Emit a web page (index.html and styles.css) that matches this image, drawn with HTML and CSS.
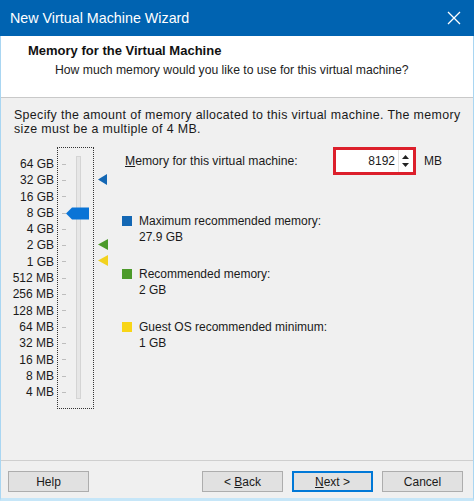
FILE: index.html
```html
<!DOCTYPE html>
<html>
<head>
<meta charset="utf-8">
<link rel="stylesheet" href="styles.css">
</head>
<body>
<div class="window">
  <div class="titlebar">
    <span class="title">New Virtual Machine Wizard</span>
    <svg class="close" width="14" height="14" viewBox="0 0 14 14"><path d="M1 1 L13 13 M13 1 L1 13" stroke="#fff" stroke-width="1.3" fill="none"/></svg>
  </div>
  <div class="header">
    <div class="h-title">Memory for the Virtual Machine</div>
    <div class="h-sub">How much memory would you like to use for this virtual machine?</div>
  </div>
  <div class="content">
    <p class="intro">Specify the amount of memory allocated to this virtual machine. The memory size must be a multiple of 4 MB.</p>
    <div class="main">
      <div class="slider">
        <div class="labels">
          <span>64 GB</span><span>32 GB</span><span>16 GB</span><span>8 GB</span><span>4 GB</span><span>2 GB</span><span>1 GB</span><span>512 MB</span><span>256 MB</span><span>128 MB</span><span>64 MB</span><span>32 MB</span><span>16 MB</span><span>8 MB</span><span>4 MB</span>
        </div>
        <div class="focus">
          <div class="ticks">
            <i></i><i></i><i></i><i></i><i></i><i></i><i></i><i></i><i></i><i></i><i></i><i></i><i></i><i></i><i></i>
          </div>
          <div class="track"></div>
          <svg class="thumb" width="24" height="13" viewBox="0 0 24 13"><path d="M0 6.5 L6 0.5 H23 V12.5 H6 Z" fill="#0a74d6"/></svg>
        </div>
        <div class="markers">
          <svg class="mk mk-blue" width="9" height="11" viewBox="0 0 9 11"><path d="M0 5.5 L9 0 V11 Z" fill="#1367b4"/></svg>
          <svg class="mk mk-green" width="10" height="11" viewBox="0 0 10 11"><path d="M0 5.5 L10 0 V11 Z" fill="#4c9a2a"/></svg>
          <svg class="mk mk-yellow" width="10" height="11" viewBox="0 0 10 11"><path d="M0 5.5 L10 0 V11 Z" fill="#f2d21e"/></svg>
        </div>
      </div>
      <div class="right">
        <div class="memrow">
          <span class="memlabel"><u>M</u>emory for this virtual machine:</span>
          <div class="spinwrap">
            <div class="spin">
              <span class="val">8192</span>
              <div class="arrows">
                <svg width="9" height="8" viewBox="0 0 9 8"><path d="M1 6 L4.5 2 L8 6 Z" fill="#222"/></svg>
                <svg width="9" height="8" viewBox="0 0 9 8"><path d="M1 2 L4.5 6 L8 2 Z" fill="#222"/></svg>
              </div>
            </div>
          </div>
          <span class="unit">MB</span>
        </div>
        <div class="legend">
          <div class="item">
            <div class="line"><span class="sq sq-blue"></span>Maximum recommended memory:</div>
            <div class="value">27.9 GB</div>
          </div>
          <div class="item">
            <div class="line"><span class="sq sq-green"></span>Recommended memory:</div>
            <div class="value">2 GB</div>
          </div>
          <div class="item">
            <div class="line"><span class="sq sq-yellow"></span>Guest OS recommended minimum:</div>
            <div class="value">1 GB</div>
          </div>
        </div>
      </div>
    </div>
  </div>
  <div class="footer">
    <button class="btn">Help</button>
    <div class="spacer"></div>
    <button class="btn">&lt; <u>B</u>ack</button>
    <button class="btn btn-default"><u>N</u>ext &gt;</button>
    <button class="btn">Cancel</button>
  </div>
</div>
</body>
</html>
```

FILE: styles.css
```css
* { box-sizing: border-box; }
html, body { margin: 0; padding: 0; }
body {
  width: 474px;
  height: 501px;
  overflow: hidden;
  font-family: "Liberation Sans", Arial, sans-serif;
  font-size: 12px;
  color: #1a1a1a;
  background: #f0f0f0;
}
.window {
  width: 474px;
  height: 501px;
  display: flex;
  flex-direction: column;
  background: #f0f0f0;
  border-left: 1px solid #a9d6f2;
  border-right: 1px solid #a9d6f2;
  border-bottom: 3px solid #c6e6f8;
}
.titlebar {
  height: 36px;
  margin: 0 -1px;
  background: #0063b1;
  display: flex;
  align-items: center;
  justify-content: space-between;
  padding: 0 13px 0 10px;
  flex: none;
}
.title {
  color: #fff;
  font-size: 14.3px;
}
.close { display: block; }
.header {
  height: 62px;
  background: #fff;
  border-bottom: 1px solid #c9c9c9;
  padding: 7px 0 0 27px;
  flex: none;
}
.h-title {
  font-weight: bold;
  font-size: 13px;
  line-height: 16px;
  color: #111;
}
.h-sub {
  margin-top: 3px;
  padding-left: 27px;
  font-size: 12.2px;
  line-height: 16px;
  color: #222;
}
.content {
  flex: 1;
  padding: 10px 0 0 13px;
}
.intro {
  margin: 0;
  line-height: 14px;
  width: 456px;
  font-size: 12.4px;
  letter-spacing: 0.35px;
}
.main {
  display: flex;
  margin-top: 11px;
}
.slider {
  display: flex;
  width: 108px;
  flex: none;
}
.labels {
  width: 40px;
  display: flex;
  flex-direction: column;
  align-items: flex-end;
  padding-top: 9px;
}
.labels span {
  height: 16.3px;
  line-height: 16.3px;
  white-space: nowrap;
}
.focus {
  position: relative;
  margin-left: 3px;
  width: 37px;
  height: 262px;
  border: 1px dotted #333;
}
.ticks {
  display: flex;
  flex-direction: column;
  padding-top: 8px;
  padding-left: 4px;
}
.ticks i {
  display: flex;
  align-items: center;
  height: 16.3px;
}
.ticks i::before {
  content: "";
  width: 4px;
  height: 1px;
  background: #bdbdbd;
}
.track {
  position: absolute;
  left: 18px;
  top: 8px;
  width: 5px;
  height: 243px;
  background: #e6e6e6;
  border: 1px solid #d4d4d4;
}
.thumb {
  position: absolute;
  left: 8px;
  top: 59px;
}
.markers {
  position: relative;
  flex: 1;
}
.mk { position: absolute; left: 4px; }
.mk-blue { top: 27px; }
.mk-green { top: 92px; }
.mk-yellow { top: 108px; }
.right {
  flex: 1;
}
.memrow {
  display: flex;
  align-items: center;
  height: 28px;
}
.memlabel {
  width: 211px;
  padding-left: 3px;
  font-size: 12.2px;
}
.spinwrap {
  width: 83px;
  height: 28px;
  border: 3px solid #dc1f2b;
}
.spin {
  display: flex;
  height: 22px;
  background: #fff;
  align-items: center;
}
.val {
  flex: 1;
  text-align: right;
  padding-right: 3px;
}
.arrows {
  width: 14px;
  height: 22px;
  display: flex;
  flex-direction: column;
  justify-content: center;
  align-items: center;
  border-left: 1px solid #e3e3e3;
  margin-right: 1px;
}
.arrows svg { display: block; }
.unit { margin-left: 8px; }
.legend {
  margin-top: 37px;
  display: flex;
  flex-direction: column;
  gap: 19px;
}
.item .line {
  display: flex;
  align-items: center;
  height: 17px;
}
.sq {
  width: 10px;
  height: 10px;
  margin-right: 7px;
}
.sq-blue { background: #1367b4; }
.sq-green { background: #4c9a2a; }
.sq-yellow { background: #f8d516; }
.value {
  padding-left: 17px;
  line-height: 17px;
}
.footer {
  flex: none;
  height: 38px;
  border-top: 1px solid #cfcfcf;
  display: flex;
  align-items: flex-start;
  padding: 10px 10px 0 7px;
  gap: 9px;
}
.spacer { flex: 1; }
.btn {
  width: 81px;
  height: 21px;
  font-family: "Liberation Sans", Arial, sans-serif;
  font-size: 12px;
  color: #1a1a1a;
  background: #e1e1e1;
  border: 1px solid #adadad;
  padding: 0;
  margin: 0;
}
.btn-default {
  border: 2px solid #0078d7;
  background: #e1e1e1;
}
```
